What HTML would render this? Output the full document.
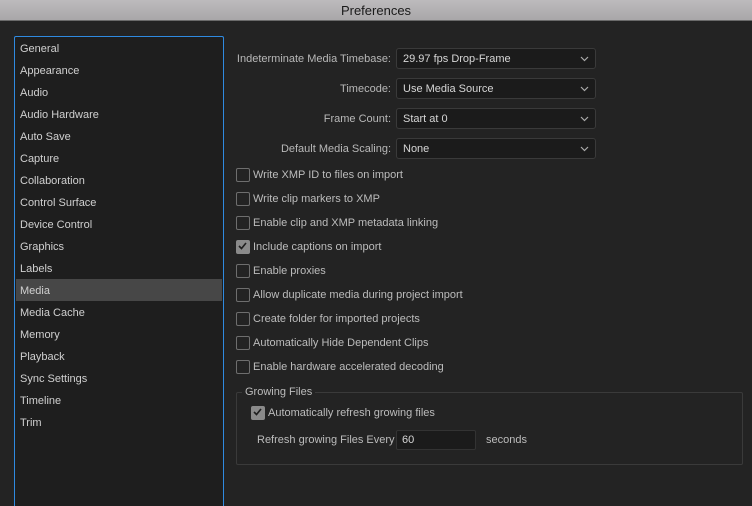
<!DOCTYPE html>
<html><head><style>
*{margin:0;padding:0;box-sizing:border-box}
html{width:752px;height:506px;overflow:hidden}
body{width:752px;height:506px;background:#232323;font-family:"Liberation Sans",sans-serif;font-size:11px;color:#c4c4c4;position:relative;overflow:hidden}
.title{position:absolute;left:0;top:0;width:752px;height:21px;background:linear-gradient(#bdbbbd,#a9a7a9);border-bottom:1px solid #6a6a6a;text-align:center;line-height:21px;font-size:13px;color:#1a1a1a}
.list{position:absolute;left:14px;top:36px;width:210px;height:472px;background:#1e1e1e;border:1px solid #2f8ae0;border-bottom:none;border-radius:2px}
.it{position:absolute;left:5px;height:22px;line-height:24px;color:#d0d0d0}
.sel{position:absolute;left:1px;top:242px;width:206px;height:22px;background:#474747}
.lbl{position:absolute;right:361px;color:#b8b8b8;line-height:22px}
.dd{position:absolute;left:396px;width:200px;height:21px;background:#1b1b1b;border:1px solid #3a3a3a;border-radius:3px;line-height:21px;padding-left:6px;color:#d6d6d6}
.dd svg{position:absolute;right:6px;top:7px}
.cb{position:absolute;left:236px;height:16px;line-height:16px;padding-left:17px;color:#bcbcbc}
.cb:before{content:"";position:absolute;left:0;top:1px;width:12px;height:12px;border:1px solid #6e6e6e;border-radius:2px}
.ck:before{background:#8a8a8a;border-color:#8a8a8a}
.ck svg{position:absolute;left:2px;top:3px}
.grp{position:absolute;left:236px;top:392px;width:507px;height:73px;border:1px solid #3a3a3a;border-radius:2px}
</style></head><body>
<div class="title">Preferences</div>
<div class="list">
<div class="sel"></div>
<div class="it" style="top:0">General</div>
<div class="it" style="top:22px">Appearance</div>
<div class="it" style="top:44px">Audio</div>
<div class="it" style="top:66px">Audio Hardware</div>
<div class="it" style="top:88px">Auto Save</div>
<div class="it" style="top:110px">Capture</div>
<div class="it" style="top:132px">Collaboration</div>
<div class="it" style="top:154px">Control Surface</div>
<div class="it" style="top:176px">Device Control</div>
<div class="it" style="top:198px">Graphics</div>
<div class="it" style="top:220px">Labels</div>
<div class="it" style="top:242px">Media</div>
<div class="it" style="top:264px">Media Cache</div>
<div class="it" style="top:286px">Memory</div>
<div class="it" style="top:308px">Playback</div>
<div class="it" style="top:330px">Sync Settings</div>
<div class="it" style="top:352px">Timeline</div>
<div class="it" style="top:374px">Trim</div>
</div>

<div class="lbl" style="top:48px">Indeterminate Media Timebase:</div>
<div class="lbl" style="top:78px">Timecode:</div>
<div class="lbl" style="top:108px">Frame Count:</div>
<div class="lbl" style="top:138px">Default Media Scaling:</div>
<div class="dd" style="top:48px">29.97 fps Drop-Frame<svg width="9" height="6"><path d="M1 1L4.5 4.5L8 1" stroke="#aaa" fill="none" stroke-width="1.2"/></svg></div>
<div class="dd" style="top:78px">Use Media Source<svg width="9" height="6"><path d="M1 1L4.5 4.5L8 1" stroke="#aaa" fill="none" stroke-width="1.2"/></svg></div>
<div class="dd" style="top:108px">Start at 0<svg width="9" height="6"><path d="M1 1L4.5 4.5L8 1" stroke="#aaa" fill="none" stroke-width="1.2"/></svg></div>
<div class="dd" style="top:138px">None<svg width="9" height="6"><path d="M1 1L4.5 4.5L8 1" stroke="#aaa" fill="none" stroke-width="1.2"/></svg></div>

<div class="cb" style="top:167px">Write XMP ID to files on import</div>
<div class="cb" style="top:191px">Write clip markers to XMP</div>
<div class="cb" style="top:215px">Enable clip and XMP metadata linking</div>
<div class="cb ck" style="top:239px"><svg width="9" height="8"><path d="M1 4L3.5 6.5L8 1" stroke="#1e1e1e" fill="none" stroke-width="1.6"/></svg>Include captions on import</div>
<div class="cb" style="top:263px">Enable proxies</div>
<div class="cb" style="top:287px">Allow duplicate media during project import</div>
<div class="cb" style="top:311px">Create folder for imported projects</div>
<div class="cb" style="top:335px">Automatically Hide Dependent Clips</div>
<div class="cb" style="top:359px">Enable hardware accelerated decoding</div>

<div class="grp"></div>
<div style="position:absolute;left:242px;top:386px;background:#232323;padding:0 3px;color:#bcbcbc">Growing Files</div>
<div class="cb ck" style="top:405px;left:251px"><svg width="9" height="8"><path d="M1 4L3.5 6.5L8 1" stroke="#1e1e1e" fill="none" stroke-width="1.6"/></svg>Automatically refresh growing files</div>
<div style="position:absolute;left:257px;top:434px;color:#bcbcbc">Refresh growing Files Every</div>
<div style="position:absolute;left:396px;top:430px;width:80px;height:20px;background:#1b1b1b;border:1px solid #333;border-radius:2px;padding-left:5px;line-height:19px;color:#d6d6d6">60</div>
<div style="position:absolute;left:486px;top:434px;color:#bcbcbc">seconds</div>
</body></html>
